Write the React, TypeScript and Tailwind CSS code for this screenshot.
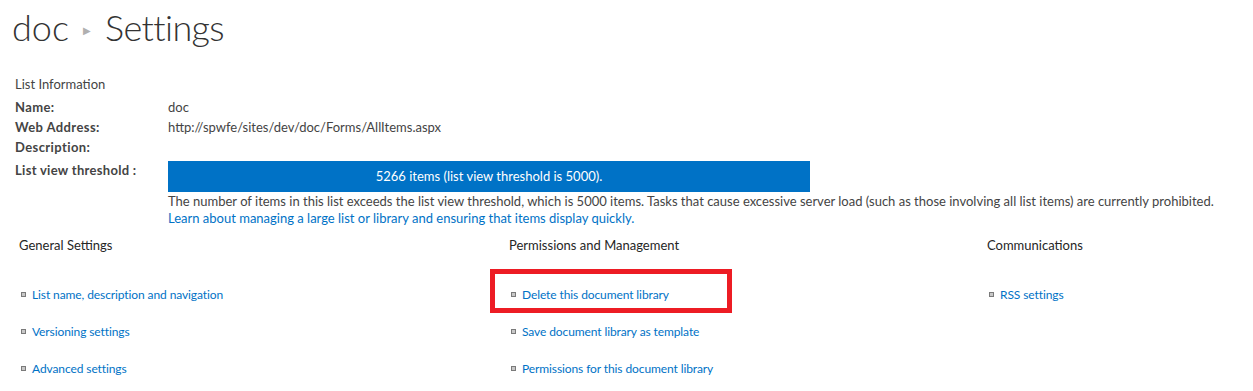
import React from "react";

const Bullet = () => (
  <span className="inline-block w-[5px] h-[5px] border border-[#7a7a7a] bg-[#c8c8c8] shrink-0" />
);

const LinkItem = ({ text, boxed }: { text: string; boxed?: boolean }) => (
  <div className="relative flex items-center h-[37px] pl-[2px]">
    <Bullet />
    <span className="ml-[6px] text-[12px] tracking-[-0.1px] text-[#0072c6]">{text}</span>
    {boxed && (
      <div className="absolute left-[-19px] top-[-7px] w-[242px] h-[44px] border-[5px] border-[#ed1c24]" />
    )}
  </div>
);

export default function App() {
  return (
    <div
      className="w-[1253px] h-[391px] bg-white overflow-hidden text-[13px] text-[#444]"
      style={{ fontFamily: "Lato, 'Open Sans', sans-serif" }}
    >
      <div className="flex items-center pl-[12px] pt-[4px] h-[50px] text-[36px] font-light text-[#333] leading-none">
        <span>doc</span>
        <span className="mx-[14px] text-[10px] text-[#b0b0b0] mt-[6px]">▶</span>
        <span className="tracking-[-0.6px]">Settings</span>
      </div>

      <div className="pl-[15px] pt-[24px]">
        <div className="h-[20px] leading-[20px]">List Information</div>
        <div className="flex mt-[3px] h-[20px] leading-[20px]">
          <div className="w-[153px] font-bold tracking-[0.4px]">Name:</div>
          <div>doc</div>
        </div>
        <div className="flex h-[20px] leading-[20px]">
          <div className="w-[153px] font-bold tracking-[0.4px]">Web Address:</div>
          <div>http://spwfe/sites/dev/doc/Forms/AllItems.aspx</div>
        </div>
        <div className="flex h-[20px] leading-[20px]">
          <div className="w-[153px] font-bold tracking-[0.4px]">Description:</div>
          <div></div>
        </div>
        <div className="flex pt-[2px]">
          <div className="w-[153px] font-bold tracking-[0.3px] leading-[20px] pt-[1px]">List view threshold :</div>
          <div>
            <div className="mt-[2px] w-[642px] h-[31px] bg-[#0072c6] text-white flex items-center justify-center">
              5266 items (list view threshold is 5000).
            </div>
            <div className="leading-[17px] mt-[1px]">
              The number of items in this list exceeds the list view threshold, which is 5000 items. Tasks that cause excessive server load (such as those involving all list items) are currently prohibited.
              <br />
              <span className="text-[#0072c6]">Learn about managing a large list or library and ensuring that items display quickly.</span>
            </div>
          </div>
        </div>
      </div>

      <div className="flex pl-[15px] mt-[8px]">
        <div className="w-[490px] pl-[4px]">
          <div className="h-[20px] leading-[20px] text-[#262626]">General Settings</div>
          <div className="mt-[21px]">
            <LinkItem text="List name, description and navigation" />
            <LinkItem text="Versioning settings" />
            <LinkItem text="Advanced settings" />
          </div>
        </div>
        <div className="w-[478px] pl-[4px]">
          <div className="h-[20px] leading-[20px] text-[#262626]">Permissions and Management</div>
          <div className="mt-[21px]">
            <LinkItem text="Delete this document library" boxed />
            <LinkItem text="Save document library as template" />
            <LinkItem text="Permissions for this document library" />
          </div>
        </div>
        <div className="pl-[4px]">
          <div className="h-[20px] leading-[20px] text-[#262626]">Communications</div>
          <div className="mt-[21px]">
            <LinkItem text="RSS settings" />
          </div>
        </div>
      </div>
    </div>
  );
}
